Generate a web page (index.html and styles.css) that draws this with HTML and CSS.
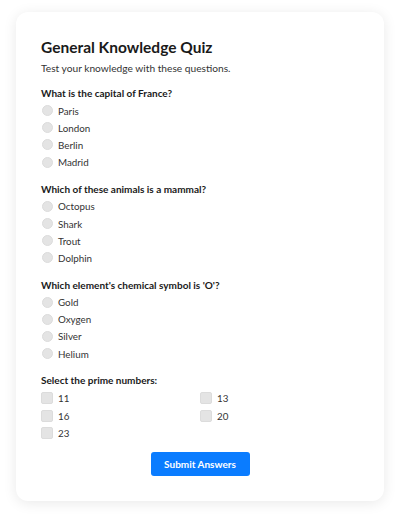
FILE: index.html
```html
<!DOCTYPE html>
<html lang="en">
<head>
  <meta charset="UTF-8">
  <title>General Knowledge Quiz</title>
  <link rel="stylesheet" href="styles.css">
</head>
<body>
  <form class="quiz">
    <h1>General Knowledge Quiz</h1>
    <p class="intro">Test your knowledge with these questions.</p>

    <div class="question">
      <h2>What is the capital of France?</h2>
      <label class="choice"><input type="radio" name="q1"> Paris</label>
      <label class="choice"><input type="radio" name="q1"> London</label>
      <label class="choice"><input type="radio" name="q1"> Berlin</label>
      <label class="choice"><input type="radio" name="q1"> Madrid</label>
    </div>

    <div class="question">
      <h2>Which of these animals is a mammal?</h2>
      <label class="choice"><input type="radio" name="q2"> Octopus</label>
      <label class="choice"><input type="radio" name="q2"> Shark</label>
      <label class="choice"><input type="radio" name="q2"> Trout</label>
      <label class="choice"><input type="radio" name="q2"> Dolphin</label>
    </div>

    <div class="question">
      <h2>Which element's chemical symbol is 'O'?</h2>
      <label class="choice"><input type="radio" name="q3"> Gold</label>
      <label class="choice"><input type="radio" name="q3"> Oxygen</label>
      <label class="choice"><input type="radio" name="q3"> Silver</label>
      <label class="choice"><input type="radio" name="q3"> Helium</label>
    </div>

    <div class="question">
      <h2>Select the prime numbers:</h2>
      <div class="grid">
        <label class="choice"><input type="checkbox"> 11</label>
        <label class="choice"><input type="checkbox"> 13</label>
        <label class="choice"><input type="checkbox"> 16</label>
        <label class="choice"><input type="checkbox"> 20</label>
        <label class="choice"><input type="checkbox"> 23</label>
      </div>
    </div>

    <div class="actions">
      <button type="button" class="submit">Submit Answers</button>
    </div>
  </form>
</body>
</html>
```

FILE: styles.css
```css
body {
  margin: 0;
  padding: 12px 16px 20px;
  background: #fff;
  font-family: Lato, "Noto Sans", Arial, sans-serif;
  color: #333;
}
.quiz {
  background: #fff;
  border-radius: 12px;
  box-shadow: 0 2px 14px rgba(0, 0, 0, 0.09);
  padding: 24px 25px 25px;
}
h1 {
  margin: 0;
  font-size: 15.5px;
  line-height: 22px;
  color: #1a1a1a;
}
.intro {
  margin: 2px 0 9px;
  font-size: 10.2px;
  line-height: 16px;
}
.question {
  margin-bottom: 10px;
}
.question h2 {
  margin: 0 0 1px;
  font-size: 10px;
  line-height: 16px;
  color: #1a1a1a;
}
.choice {
  display: flex;
  align-items: center;
  gap: 5px;
  height: 17.2px;
  font-size: 9.8px;
}
.choice input {
  appearance: none;
  margin: 0 0 0 1px;
  width: 11px;
  height: 11px;
  background: #e4e4e4;
  border: 1px solid #dcdcdc;
  border-radius: 50%;
}
.choice input[type="checkbox"] {
  width: 12px;
  height: 12px;
  margin-left: 0;
  border-radius: 2px;
}
.grid {
  display: grid;
  grid-template-columns: 1fr 1fr;
}
.grid .choice {
  height: 17.5px;
}
.actions {
  display: flex;
  justify-content: center;
}
.submit {
  width: 99px;
  height: 24px;
  border: 0;
  border-radius: 3px;
  background: #0a7cff;
  color: #fff;
  font: bold 10px Lato, "Noto Sans", Arial, sans-serif;
}
```
